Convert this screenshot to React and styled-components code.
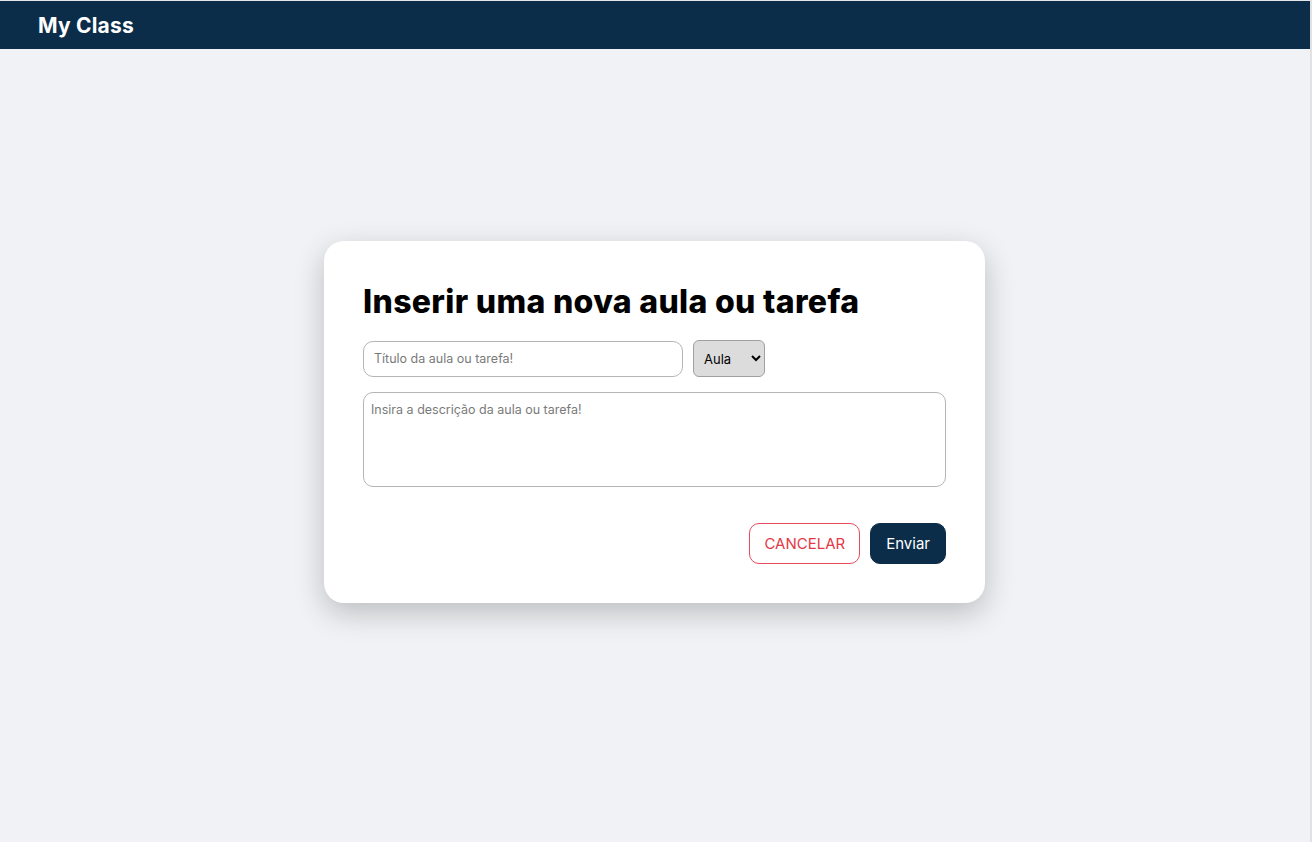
import React from 'react';
import styled, { createGlobalStyle } from 'styled-components';

const GlobalStyle = createGlobalStyle`
  * { box-sizing: border-box; }
  html, body { margin: 0; padding: 0; }
  body {
    background: #f0f2f5;
    font-family: Inter, "Noto Sans", sans-serif;
    border-top: 1px solid #e4e6ea;
    border-right: 2px solid #e2e2e2;
  }
`;

const Header = styled.header`
  height: 48px;
  background: #0b2d4a;
  display: flex;
  align-items: center;
  padding-left: 38px;
`;

const Brand = styled.h1`
  margin: 0;
  color: #fff;
  font-size: 21px;
  font-weight: 700;
  letter-spacing: 0.2px;
`;

const Main = styled.main`
  display: flex;
  justify-content: center;
  align-items: flex-start;
  padding-top: 192px;
  margin-right: 1px;
  min-height: calc(100vh - 49px);
`;

const Card = styled.form`
  width: 661px;
  background: #fff;
  border-radius: 20px;
  padding: 41px 39px 39px;
  box-shadow: 0 10px 30px rgba(0, 0, 0, 0.22);
  display: flex;
  flex-direction: column;
`;

const Title = styled.h2`
  margin: 0 0 18px;
  font-size: 32px;
  font-weight: 800;
  color: #000;
  letter-spacing: 0.33px;
  line-height: 40px;
`;

const Row = styled.div`
  display: flex;
  align-items: center;
  gap: 10px;
`;

const TextInput = styled.input`
  width: 320px;
  height: 36px;
  border: 1px solid #b5b5b5;
  border-radius: 10px;
  padding: 0 10px;
  font-family: inherit;
  font-size: 12.5px;
  outline: none;
  &::placeholder { color: #7a7a7a; }
`;

const Select = styled.select`
  width: 72px;
  height: 37px;
  border: 1px solid #a0a0a0;
  border-radius: 6px;
  background: #dcdcdc;
  padding: 0 6px;
  font-family: inherit;
  font-size: 13px;
  color: #000;
`;

const TextArea = styled.textarea`
  margin-top: 15px;
  width: 100%;
  height: 95px;
  border: 1px solid #b5b5b5;
  border-radius: 10px;
  padding: 9px 7px;
  font-family: inherit;
  font-size: 12.5px;
  resize: none;
  outline: none;
  &::placeholder { color: #7a7a7a; }
`;

const Actions = styled.div`
  display: flex;
  justify-content: flex-end;
  gap: 10px;
  margin-top: 36px;
`;

const Button = styled.button`
  height: 41px;
  padding: 0 ${p => (p.$variant === 'cancel' ? '14px' : '15px')};
  border-radius: 10px;
  font-family: inherit;
  font-size: 15px;
  cursor: pointer;
  border: 1px solid ${p => (p.$variant === 'cancel' ? '#e84a5f' : '#0b2d4a')};
  background: ${p => (p.$variant === 'cancel' ? '#fff' : '#0b2d4a')};
  color: ${p => (p.$variant === 'cancel' ? '#e63946' : '#fff')};
`;

export default function App() {
  return (
    <>
      <GlobalStyle />
      <Header>
        <Brand>My Class</Brand>
      </Header>
      <Main>
        <Card onSubmit={e => e.preventDefault()}>
          <Title>Inserir uma nova aula ou tarefa</Title>
          <Row>
            <TextInput placeholder="Título da aula ou tarefa!" />
            <Select defaultValue="aula">
              <option value="aula">Aula</option>
              <option value="tarefa">Tarefa</option>
            </Select>
          </Row>
          <TextArea placeholder="Insira a descrição da aula ou tarefa!" />
          <Actions>
            <Button type="button" $variant="cancel">CANCELAR</Button>
            <Button type="submit">Enviar</Button>
          </Actions>
        </Card>
      </Main>
    </>
  );
}
